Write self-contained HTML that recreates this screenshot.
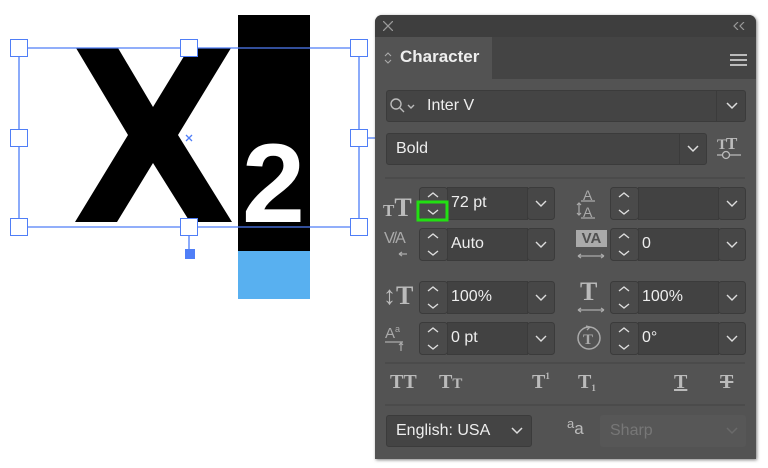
<!DOCTYPE html>
<html><head><meta charset="utf-8"><style>
*{margin:0;padding:0;box-sizing:border-box}
body{width:768px;height:468px;background:#fff;position:relative;overflow:hidden;font-family:"Liberation Sans",sans-serif}
.a{position:absolute}
.h{position:absolute;width:18px;height:18px;border:1.5px solid #4f7ef7;background:#fff}
.panel{position:absolute;left:375px;top:15px;width:381px;height:444px;background:#535353;border-radius:7px 7px 0 0;box-shadow:1px 1px 3px rgba(0,0,0,.5);overflow:hidden}
.f{position:absolute;background:#444;border:1px solid #3b3b3b;border-radius:3px;color:#eee;font-size:15px}
.sep{position:absolute;left:10px;width:360px;height:2px;background:#4b4b4b}
.ic{position:absolute;color:#bbb;font-family:"Liberation Serif",serif;font-weight:bold}
.t{position:absolute;color:#eee;font-size:16px}
</style></head><body>
<div class="a" style="left:238px;top:15px;width:72px;height:236px;background:#000"></div>
<div class="a" style="left:238px;top:251px;width:72px;height:48px;background:#58b0f0"></div>
<svg class="a" style="left:0;top:0" width="375" height="300">
<polygon points="76,48 118,48 153,107 189,48 231,48 178,135 232,222 190,222 153,163 117,222 75,222 128,135" fill="#000"/>
<text x="242" y="222" font-family="Liberation Sans" font-weight="bold" font-size="112" fill="#fff" textLength="63" lengthAdjust="spacingAndGlyphs">2</text>
<line x1="19" y1="48" x2="359" y2="48" stroke="#4f7ef7" stroke-width="1.3"/>
<line x1="19" y1="227" x2="359" y2="227" stroke="#4f7ef7" stroke-width="1.3"/>
<line x1="19" y1="48" x2="19" y2="227" stroke="#4f7ef7" stroke-width="1.3"/>
<line x1="359" y1="48" x2="359" y2="227" stroke="#4f7ef7" stroke-width="1.3"/>
<line x1="359" y1="138" x2="375" y2="138" stroke="#4f7ef7" stroke-width="1.3"/>
<line x1="189" y1="227" x2="189" y2="250" stroke="#4f7ef7" stroke-width="1.3"/>
<path d="M186 135l6 6M192 135l-6 6" stroke="#4f7ef7" stroke-width="1.3"/>
<rect x="185" y="249" width="10" height="10" fill="#4f7ef7"/>
</svg>
<div class="h" style="left:10px;top:39px"></div><div class="h" style="left:180px;top:39px"></div><div class="h" style="left:350px;top:39px"></div>
<div class="h" style="left:10px;top:129px"></div><div class="h" style="left:350px;top:129px"></div>
<div class="h" style="left:10px;top:218px"></div><div class="h" style="left:180px;top:218px"></div><div class="h" style="left:350px;top:218px"></div>

<div class="panel">
<div class="a" style="left:0;top:0;width:381px;height:22px;background:#3e3e3e"></div>
<svg class="a" style="left:8px;top:6px" width="10" height="10"><path d="M0 0l10 10M10 0L0 10" stroke="#999" stroke-width="1.3"/></svg>
<svg class="a" style="left:358px;top:7px" width="12" height="8"><path d="M5 0L1 4l4 4M11 0L7 4l4 4" stroke="#999" stroke-width="1.2" fill="none"/></svg>
<div class="a" style="left:0;top:22px;width:381px;height:42px;background:#444"></div>
<div class="a" style="left:0;top:22px;width:117px;height:42px;background:#535353"></div>
<svg class="a" style="left:9px;top:36px" width="8" height="14"><path d="M1 5l3-3 3 3M1 9l3 3 3-3" stroke="#aaa" stroke-width="1.1" fill="none"/></svg>
<div class="a" style="left:25px;top:32px;color:#eee;font-size:17px;font-weight:bold">Character</div>
<div class="a" style="left:355px;top:39px;width:17px;height:2px;background:#bbb;box-shadow:0 5px 0 #bbb,0 10px 0 #bbb"></div>

<div class="f" style="left:11px;top:75px;width:360px;height:32px"></div>
<div class="a" style="left:341px;top:76px;width:1px;height:30px;background:#3b3b3b"></div>
<svg class="a" style="left:14px;top:82px" width="30" height="20"><circle cx="7" cy="7" r="5" stroke="#bbb" stroke-width="1.4" fill="none"/><path d="M11 11l4 4M19 8l3 3 3-3" stroke="#bbb" stroke-width="1.4" fill="none"/></svg>
<div class="t" style="left:52px;top:82px">Inter V</div>
<svg class="a" style="left:350px;top:86px" width="14" height="10"><path d="M2 2l5 5 5-5" stroke="#ddd" stroke-width="1.5" fill="none"/></svg>
<div class="f" style="left:11px;top:118px;width:321px;height:32px"></div>
<div class="a" style="left:304px;top:119px;width:1px;height:30px;background:#3b3b3b"></div>
<div class="t" style="left:21px;top:125px">Bold</div>
<svg class="a" style="left:311px;top:129px" width="14" height="10"><path d="M2 2l5 5 5-5" stroke="#ddd" stroke-width="1.5" fill="none"/></svg>
<div class="ic" style="left:342px;top:119px;font-size:15px;letter-spacing:-1px">T<span style="font-size:17px">T</span></div>
<svg class="a" style="left:342px;top:135px" width="24" height="10"><path d="M0 5h24" stroke="#bbb" stroke-width="1.3"/><circle cx="9" cy="5" r="3.5" fill="#535353" stroke="#bbb" stroke-width="1.3"/></svg>
<div class="sep" style="top:162px"></div>

<svg class="a" style="left:0;top:0" width="381" height="444">
<defs><g id="fld">
<rect x="0.5" y="0.5" width="28" height="32" rx="3" fill="#4a4a4a" stroke="#3b3b3b"/>
<rect x="28.5" y="0.5" width="80" height="32" fill="#424242" stroke="#3b3b3b"/>
<rect x="108.5" y="0.5" width="27" height="32" rx="3" fill="#474747" stroke="#3b3b3b"/>
<path d="M9 10l5-4 5 4M9 23l5 4 5-4M117 14l5 5 5-5" stroke="#ddd" stroke-width="1.4" fill="none"/>
</g></defs>
<use href="#fld" x="44" y="172"/><use href="#fld" x="235" y="172"/>
<use href="#fld" x="44" y="213"/><use href="#fld" x="235" y="213"/>
<use href="#fld" x="44" y="266"/><use href="#fld" x="235" y="266"/>
<use href="#fld" x="44" y="307"/><use href="#fld" x="235" y="307"/>
<rect x="43" y="187" width="29" height="18" fill="none" stroke="#22e012" stroke-width="3"/>
<!-- leading icon -->
<text x="208" y="185" font-family="Liberation Sans" font-size="14" fill="#aaa">A</text>
<text x="208" y="202" font-family="Liberation Sans" font-size="14" fill="#aaa">A</text>
<path d="M206 186h14M206 203h14M204 188v12M202 190l2-2 2 2M202 198l2 2 2-2" stroke="#aaa" stroke-width="1.2" fill="none"/>
<!-- tracking -->
<path d="M203 241h26M203 241l3-2M203 241l3 2M229 241l-3-2M229 241l-3 2" stroke="#aaa" stroke-width="1.3" fill="none"/>
<path d="M203 295h26M203 295l3-2M203 295l3 2M229 295l-3-2M229 295l-3 2" stroke="#aaa" stroke-width="1.3" fill="none"/>
<path d="M24 239h8M24 239l3-2M24 239l3 2" stroke="#aaa" stroke-width="1.3" fill="none"/>
<path d="M10 327h18M26 336v-8M24 330l2-2 2 2" stroke="#aaa" stroke-width="1.2" fill="none"/>
</svg>
<div class="t" style="left:76px;top:179px">72 pt</div>
<div class="t" style="left:76px;top:220px">Auto</div>
<div class="t" style="left:267px;top:220px">0</div>
<div class="t" style="left:76px;top:273px">100%</div>
<div class="t" style="left:267px;top:273px">100%</div>
<div class="t" style="left:76px;top:314px">0 pt</div>
<div class="t" style="left:267px;top:314px">0°</div>
<div class="ic" style="left:8px;top:178px;font-size:17px">T<span style="font-size:26px">T</span></div>
<div class="a" style="left:9px;top:215px;color:#aaa;font-size:16px;letter-spacing:-2px">V/A</div>
<div class="a" style="left:226px;top:215px;width:31px;height:17px;background:#aaa;color:#505050;font-size:15px;font-weight:bold;text-align:center;line-height:17px;left:201px">VA</div>
<div class="ic" style="left:8px;top:266px;font-size:26px">↕T</div>
<div class="ic" style="left:205px;top:262px;font-size:26px">T</div>
<div class="a" style="left:10px;top:309px;color:#aaa;font-size:15px">A<span style="font-size:9px;vertical-align:6px">a</span></div>
<svg class="a" style="left:200px;top:307px" width="30" height="30"><circle cx="14" cy="16" r="11" fill="none" stroke="#aaa" stroke-width="1.5"/><path d="M11 4l4 1-3 3" stroke="#aaa" stroke-width="1.3" fill="none"/><text x="8" y="22" font-family="Liberation Serif" font-weight="bold" font-size="15" fill="#aaa">T</text></svg>
<div class="sep" style="top:347px"></div>
<div class="ic" style="left:15px;top:356px;font-size:20px">TT</div>
<div class="ic" style="left:64px;top:356px;font-size:20px">T<span style="font-size:15px">T</span></div>
<div class="ic" style="left:157px;top:356px;font-size:20px">T<span style="font-size:9px;vertical-align:9px">1</span></div>
<div class="ic" style="left:203px;top:356px;font-size:20px">T<span style="font-size:9px;vertical-align:-3px">1</span></div>
<div class="ic" style="left:299px;top:356px;font-size:20px;text-decoration:underline">T</div>
<div class="ic" style="left:345px;top:356px;font-size:20px;text-decoration:line-through">T</div>
<div class="sep" style="top:389px"></div>
<div class="f" style="left:11px;top:400px;width:146px;height:32px"></div>
<div class="t" style="left:21px;top:407px">English: USA</div>
<svg class="a" style="left:135px;top:411px" width="14" height="10"><path d="M2 2l5 5 5-5" stroke="#ddd" stroke-width="1.5" fill="none"/></svg>
<div class="a" style="left:192px;top:401px;color:#bbb;font-size:17px"><span style="font-size:13px;vertical-align:6px">a</span>a</div>
<div class="a" style="left:225px;top:400px;width:146px;height:32px;background:#575757;border-radius:3px"></div>
<div class="a" style="left:235px;top:407px;color:#777;font-size:16px">Sharp</div>
<svg class="a" style="left:350px;top:411px" width="14" height="10"><path d="M2 2l5 5 5-5" stroke="#6a6a6a" stroke-width="1.5" fill="none"/></svg>
</div>
</body></html>
